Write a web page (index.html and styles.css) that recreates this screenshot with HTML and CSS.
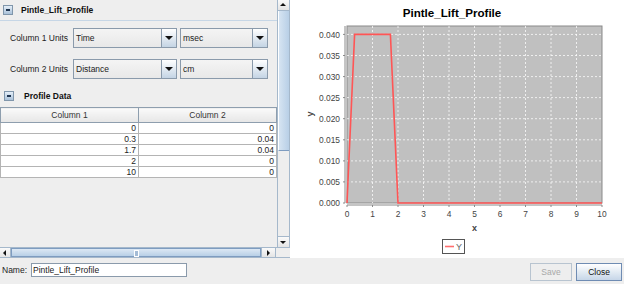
FILE: index.html
```html
<!DOCTYPE html>
<html lang="en">
  <head>
    <meta charset="UTF-8" />
    <title>Pintle_Lift_Profile</title>
    <link rel="stylesheet" href="styles.css">
  </head>
  <body>
    <div class="window">
      <div class="main">
        <!-- left: profile editor -->
        <div class="left">
          <div class="left-view">
            <div class="left-content">
              <div class="section-head first">
                <span class="toggle"></span>
                <span class="section-title">Pintle_Lift_Profile</span>
              </div>

              <div class="unit-row first-row">
                <span class="unit-label">Column 1 Units</span>
                <div class="combo wide"><span class="combo-text">Time</span><span class="combo-arrow"></span></div>
                <div class="combo narrow"><span class="combo-text">msec</span><span class="combo-arrow"></span></div>
              </div>
              <div class="unit-row">
                <span class="unit-label">Column 2 Units</span>
                <div class="combo wide"><span class="combo-text">Distance</span><span class="combo-arrow"></span></div>
                <div class="combo narrow"><span class="combo-text">cm</span><span class="combo-arrow"></span></div>
              </div>

              <div class="section-head second">
                <span class="toggle"></span>
                <span class="section-title">Profile Data</span>
              </div>

              <table class="data-table">
                <thead>
                  <tr><th>Column 1</th><th>Column 2</th></tr>
                </thead>
                <tbody>
                  <tr><td>0</td><td>0</td></tr>
                  <tr><td>0.3</td><td>0.04</td></tr>
                  <tr><td>1.7</td><td>0.04</td></tr>
                  <tr><td>2</td><td>0</td></tr>
                  <tr><td>10</td><td>0</td></tr>
                </tbody>
              </table>
            </div>

            <div class="vscroll">
              <div class="sb-btn"><span class="arrow up"></span></div>
              <div class="v-thumb"></div>
              <div class="v-track"></div>
              <div class="sb-btn"><span class="arrow down"></span></div>
            </div>
          </div>

          <div class="hscroll">
            <div class="sb-btn h"><span class="arrow left"></span></div>
            <div class="h-thumb"><span class="grip"></span></div>
            <div class="sb-btn h"><span class="arrow right"></span></div>
            <div class="sb-corner"></div>
          </div>
        </div>

        <!-- right: chart -->
        <div class="chart">
          <svg width="334" height="258" viewBox="0 0 334 258">
            <text class="chart-title" x="162" y="17" text-anchor="middle">Pintle_Lift_Profile</text>

            <rect x="57" y="26" width="255" height="177" fill="#c0c0c0" stroke="#8a8a8a" stroke-width="1"/>

            <g class="grid">
              <line x1="82.5" y1="26" x2="82.5" y2="203"/>
              <line x1="108" y1="26" x2="108" y2="203"/>
              <line x1="133.5" y1="26" x2="133.5" y2="203"/>
              <line x1="159" y1="26" x2="159" y2="203"/>
              <line x1="184.5" y1="26" x2="184.5" y2="203"/>
              <line x1="210" y1="26" x2="210" y2="203"/>
              <line x1="235.5" y1="26" x2="235.5" y2="203"/>
              <line x1="261" y1="26" x2="261" y2="203"/>
              <line x1="286.5" y1="26" x2="286.5" y2="203"/>
              <line x1="57" y1="181.9" x2="312" y2="181.9"/>
              <line x1="57" y1="160.9" x2="312" y2="160.9"/>
              <line x1="57" y1="139.8" x2="312" y2="139.8"/>
              <line x1="57" y1="118.7" x2="312" y2="118.7"/>
              <line x1="57" y1="97.6" x2="312" y2="97.6"/>
              <line x1="57" y1="76.6" x2="312" y2="76.6"/>
              <line x1="57" y1="55.5" x2="312" y2="55.5"/>
              <line x1="57" y1="34.4" x2="312" y2="34.4"/>
            </g>

            <polyline points="57,203 64.6,34.4 100.4,34.4 108,203 312,203" fill="none" stroke="#ff5555" stroke-width="1.6"/>

            <!-- axes -->
            <g class="axis">
              <line x1="55" y1="26" x2="55" y2="203"/>
              <line x1="57" y1="205" x2="312" y2="205"/>
              <line x1="53" y1="203" x2="55" y2="203"/>
              <line x1="53" y1="181.9" x2="55" y2="181.9"/>
              <line x1="53" y1="160.9" x2="55" y2="160.9"/>
              <line x1="53" y1="139.8" x2="55" y2="139.8"/>
              <line x1="53" y1="118.7" x2="55" y2="118.7"/>
              <line x1="53" y1="97.6" x2="55" y2="97.6"/>
              <line x1="53" y1="76.6" x2="55" y2="76.6"/>
              <line x1="53" y1="55.5" x2="55" y2="55.5"/>
              <line x1="53" y1="34.4" x2="55" y2="34.4"/>
              <line x1="57" y1="205" x2="57" y2="207"/>
              <line x1="82.5" y1="205" x2="82.5" y2="207"/>
              <line x1="108" y1="205" x2="108" y2="207"/>
              <line x1="133.5" y1="205" x2="133.5" y2="207"/>
              <line x1="159" y1="205" x2="159" y2="207"/>
              <line x1="184.5" y1="205" x2="184.5" y2="207"/>
              <line x1="210" y1="205" x2="210" y2="207"/>
              <line x1="235.5" y1="205" x2="235.5" y2="207"/>
              <line x1="261" y1="205" x2="261" y2="207"/>
              <line x1="286.5" y1="205" x2="286.5" y2="207"/>
              <line x1="312" y1="205" x2="312" y2="207"/>
            </g>

            <g class="tick-label" text-anchor="end">
              <text x="50" y="206">0.000</text>
              <text x="50" y="185">0.005</text>
              <text x="50" y="164">0.010</text>
              <text x="50" y="143">0.015</text>
              <text x="50" y="122">0.020</text>
              <text x="50" y="101">0.025</text>
              <text x="50" y="80">0.030</text>
              <text x="50" y="59">0.035</text>
              <text x="50" y="38">0.040</text>
            </g>
            <g class="tick-label" text-anchor="middle">
              <text x="57" y="217">0</text>
              <text x="82.5" y="217">1</text>
              <text x="108" y="217">2</text>
              <text x="133.5" y="217">3</text>
              <text x="159" y="217">4</text>
              <text x="184.5" y="217">5</text>
              <text x="210" y="217">6</text>
              <text x="235.5" y="217">7</text>
              <text x="261" y="217">8</text>
              <text x="286.5" y="217">9</text>
              <text x="312" y="217">10</text>
            </g>

            <text class="axis-name" x="184.5" y="231" text-anchor="middle">x</text>
            <text class="axis-name" x="0" y="0" text-anchor="middle" transform="translate(23 114) rotate(-90)">y</text>

            <!-- legend -->
            <rect x="152.5" y="239.5" width="22" height="14" fill="#ffffff" stroke="#555555"/>
            <line x1="155" y1="246.5" x2="164" y2="246.5" stroke="#ff6f6f" stroke-width="1.6"/>
            <text class="legend-text" x="166" y="250">Y</text>
          </svg>
        </div>
      </div>

      <div class="footer">
        <div class="name-field">
          <span class="name-label">Name:</span>
          <input class="name-input" type="text" value="Pintle_Lift_Profile" />
        </div>
        <div class="buttons">
          <button class="btn" disabled>Save</button>
          <button class="btn primary">Close</button>
        </div>
      </div>
    </div>
  </body>
</html>
```

FILE: styles.css
```css
body {
  margin: 0;
  font-family: "Liberation Sans", Arial, sans-serif;
  font-size: 8.5px;
  color: #222222;
  background-color: #eeeeee;
}

.window {
  width: 624px;
  height: 284px;
  display: flex;
  flex-direction: column;
}

.main {
  display: flex;
  height: 258px;
}

/* left panel */
.left {
  width: 290px;
  display: flex;
  flex-direction: column;
}

.left-view {
  display: flex;
  height: 247px;
}

.left-content {
  width: 277px;
  overflow: hidden;
}

.section-head {
  display: flex;
  align-items: center;
  height: 16px;
}

.section-head.first {
  height: 20px;
  border-bottom: 1px solid #c6d6e6;
}

.section-head.second {
  margin-top: 9px;
}

.toggle {
  position: relative;
  width: 8px;
  height: 8px;
  margin-left: 3px;
  margin-right: 8px;
  border: 1px solid #8096ab;
  background: linear-gradient(#e4eef8, #a9c1d9);
}

.section-head.second .toggle {
  margin-left: 4px;
  margin-right: 10px;
}

/* minus sign */
.toggle::after {
  content: "";
  position: absolute;
  left: 2px;
  top: 3px;
  width: 4px;
  height: 2px;
  background-color: #1f3550;
}

.section-title {
  font-weight: bold;
  color: #111111;
}

.unit-row {
  display: flex;
  align-items: center;
  height: 20px;
  padding-left: 10px;
  margin-top: 11px;
}

.unit-row.first-row {
  margin-top: 7px;
}

.unit-label {
  width: 63px;
}

.combo {
  display: flex;
  box-sizing: border-box;
  height: 20px;
  border: 1px solid #8a9aab;
  background: linear-gradient(#f4f4f4, #e8e8e8);
}

.combo.wide {
  width: 104px;
  margin-right: 3px;
}

.combo.narrow {
  width: 88px;
}

.combo-text {
  flex: 1;
  padding-left: 2px;
  line-height: 18px;
}

.combo-arrow {
  position: relative;
  width: 14px;
  border-left: 1px solid #8a9aab;
  background: linear-gradient(#ffffff, #c4d4e4);
}

.combo-arrow::after {
  content: "";
  position: absolute;
  left: 3px;
  top: 7px;
  border-left: 4px solid transparent;
  border-right: 4px solid transparent;
  border-top: 4px solid #111111;
}

/* table */
.data-table {
  margin-top: 3px;
  width: 277px;
  border-collapse: collapse;
  table-layout: fixed;
}

.data-table th {
  height: 14px;
  padding: 0;
  font-weight: normal;
  color: #333333;
  border: 1px solid #8e9eae;
  background: linear-gradient(#fafafa, #e6e6e6);
}

.data-table td {
  height: 10px;
  padding: 0 2px 0 0;
  line-height: 10px;
  text-align: right;
  background-color: #ffffff;
  border: 1px solid #b4b4b4;
}

/* scrollbars */
.vscroll {
  width: 13px;
  box-sizing: border-box;
  display: flex;
  flex-direction: column;
  border-left: 1px solid #a5b8cb;
  border-right: 1px solid #a5b8cb;
}

.sb-btn {
  position: relative;
  height: 10px;
  background: linear-gradient(#fafafa, #e4e4e4);
  border-bottom: 1px solid #a5b8cb;
}

.vscroll .sb-btn:last-child {
  border-bottom: none;
  border-top: 1px solid #a5b8cb;
}

.v-thumb {
  height: 139px;
  background: linear-gradient(90deg, #d6e4f2, #b8cfe6);
  border-bottom: 1px solid #7e9cc0;
  border-left: 1px solid #ffffff;
}

.v-track {
  flex: 1;
  background-color: #eeeeee;
}

.arrow {
  position: absolute;
  width: 0;
  height: 0;
}

.arrow.up {
  left: 2px;
  top: 3px;
  border-left: 3px solid transparent;
  border-right: 3px solid transparent;
  border-bottom: 3px solid #111111;
}

.arrow.down {
  left: 2px;
  top: 4px;
  border-left: 3px solid transparent;
  border-right: 3px solid transparent;
  border-top: 3px solid #111111;
}

.hscroll {
  display: flex;
  height: 11px;
  box-sizing: border-box;
  border-top: 1px solid #a5b8cb;
  border-bottom: 1px solid #a5b8cb;
}

.sb-btn.h {
  width: 10px;
  height: auto;
  border-bottom: none;
}

.hscroll .sb-btn.h:first-child {
  border-right: 1px solid #a5b8cb;
}

.hscroll .sb-btn.h:nth-child(3) {
  width: 13px;
  border-left: 1px solid #a5b8cb;
}

.arrow.left {
  left: 3px;
  top: 2px;
  border-top: 3px solid transparent;
  border-bottom: 3px solid transparent;
  border-right: 3px solid #111111;
}

.arrow.right {
  left: 5px;
  top: 2px;
  border-top: 3px solid transparent;
  border-bottom: 3px solid transparent;
  border-left: 3px solid #111111;
}

.h-thumb {
  position: relative;
  width: 250px;
  box-sizing: border-box;
  border: 1px solid #7e9cc0;
  background: linear-gradient(#dce8f4, #b8cfe6);
}

.grip {
  position: absolute;
  left: 122px;
  top: 1px;
  width: 3px;
  height: 5px;
  background-color: #a4bcd6;
  border: 1px solid #ffffff;
}

.sb-corner {
  flex: 1;
  border-left: 1px solid #a5b8cb;
  background-color: #eeeeee;
}

/* chart */
.chart {
  flex: 1;
  background-color: #ffffff;
}

.chart svg {
  display: block;
}

.chart-title {
  font-family: "Liberation Sans", Arial, sans-serif;
  font-size: 11.6px;
  font-weight: bold;
  fill: #000000;
}

.grid line {
  stroke: #ffffff;
  stroke-width: 1;
  stroke-dasharray: 2 2;
  opacity: 0.75;
}

.axis line {
  stroke: #8a8a8a;
  stroke-width: 1;
}

.tick-label {
  font-family: "Liberation Sans", Arial, sans-serif;
  font-size: 8.4px;
  fill: #444444;
}

.axis-name {
  font-family: "Liberation Sans", Arial, sans-serif;
  font-size: 9px;
  font-weight: bold;
  fill: #444444;
}

.legend-text {
  font-family: "Liberation Sans", Arial, sans-serif;
  font-size: 9px;
  fill: #666666;
}

/* footer */
.footer {
  display: flex;
  justify-content: space-between;
  align-items: center;
  height: 26px;
  padding: 0 2px;
}

.name-field {
  display: flex;
  align-items: center;
  margin-top: -3px;
}

.name-label {
  width: 29px;
}

.name-input {
  width: 156px;
  height: 14px;
  box-sizing: border-box;
  padding: 0 1px;
  font-family: "Liberation Sans", Arial, sans-serif;
  font-size: 8.5px;
  color: #222222;
  border: 1px solid #8a9aab;
  background-color: #ffffff;
  outline: none;
}

.buttons {
  display: flex;
  gap: 4px;
  margin-top: 1px;
}

.btn {
  height: 18px;
  padding: 0;
  font-family: "Liberation Sans", Arial, sans-serif;
  font-size: 8.5px;
  color: #111111;
  border: 1px solid #6f8cb3;
  background: linear-gradient(#ffffff, #c6d6e8);
}

.btn[disabled] {
  width: 42px;
  color: #a8a8a8;
  border-color: #b8c4d0;
  background: #eeeeee;
}

.btn.primary {
  width: 46px;
}
```
